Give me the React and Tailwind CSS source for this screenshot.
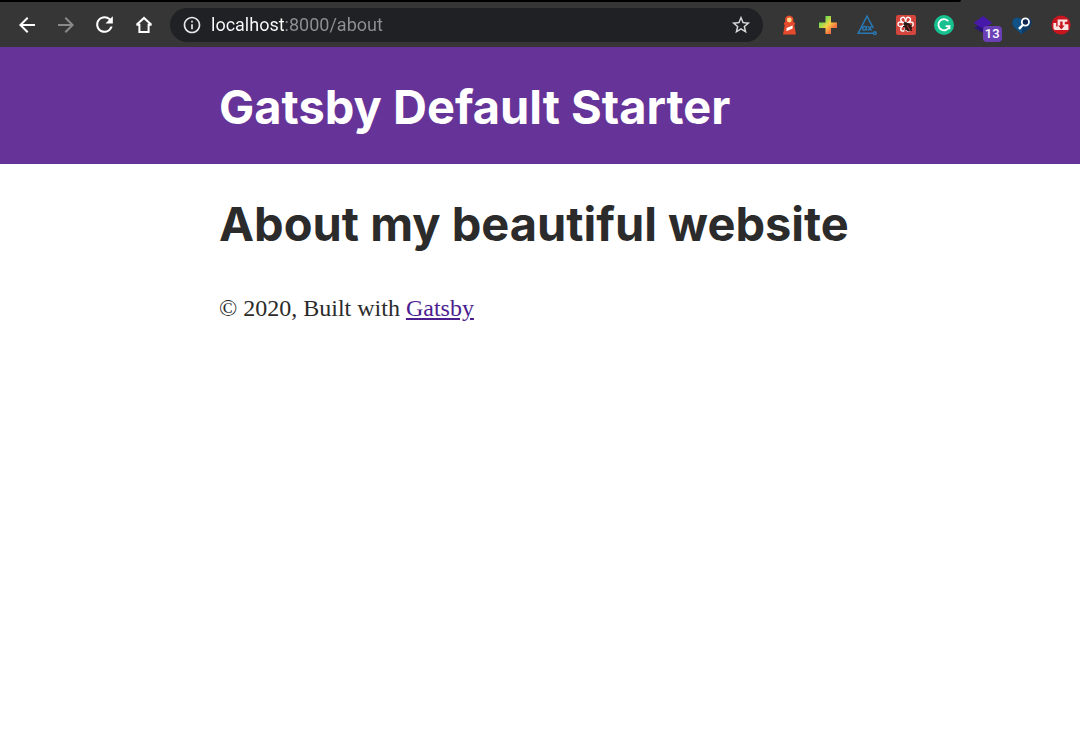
import { MdArrowBack, MdArrowForward, MdRefresh, MdInfoOutline, MdStarBorder } from 'react-icons/md'

function HomeIcon() {
  return (
    <svg width="24" height="24" viewBox="0 0 24 24" fill="none" stroke="currentColor" strokeWidth="2">
      <path d="M4.6 11.7 12 4.9l7.4 6.8M4.4 11.7h3v7.3h9.2v-7.3h3" />
    </svg>
  )
}

function LighthouseIcon() {
  return (
    <svg width="20" height="22" viewBox="0 0 20 22">
      <path d="M10 1.4c2.6.4 4.4 1.8 4.4 3.6v3.4H16v2.4h-.8L17 20.6H4l1.8-9.8H5V8.4h1.2V5C6.2 3.2 7.8 1.8 10 1.4z" fill="#e64a2c" />
      <circle cx="10.3" cy="6" r="2.4" fill="#fbd98a" />
      <path d="m7.6 14 6-2.4v3l-6.2 2.6z" fill="#fff" />
    </svg>
  )
}

function PlusIcon() {
  return (
    <svg width="20" height="20" viewBox="0 0 20 20">
      <defs>
        <linearGradient id="plus" x1="0" y1="0" x2="1" y2="1">
          <stop offset="0.25" stopColor="#7ede4e" />
          <stop offset="0.5" stopColor="#f8cf45" />
          <stop offset="0.75" stopColor="#f5713f" />
        </linearGradient>
      </defs>
      <path d="M7.5 1H13v6.5h6V13h-6v6H7.5v-6H1V7.5h6.5z" fill="url(#plus)" />
    </svg>
  )
}

function AxeIcon() {
  return (
    <svg width="22" height="22" viewBox="0 0 22 22" fill="none" stroke="#2878b4" strokeWidth="1.5">
      <path d="M17.4 19.2H2.2L11 2.2l6.3 12" />
      <circle cx="18.8" cy="19.2" r="1.4" />
      <path d="M10.4 12v4.4M10.2 14.3a1.8 1.8 0 1 0-3.6 0 1.8 1.8 0 0 0 3.6 0M12 12.2l3.6 4.2M15.6 12.2 12 16.4" />
    </svg>
  )
}

const petalAngles = [30, 90, 150, 210, 270, 330]

function ReactBugIcon() {
  return (
    <svg width="22" height="22" viewBox="0 0 22 22">
      <rect x="1" y="1" width="20" height="20" rx="2" fill="#d3453d" />
      <g fill="none" stroke="#fff" strokeWidth="1.4">
        {petalAngles.map((angle) => (
          <path
            key={angle}
            d="M10.6 10.2 8.6 6.4C8 3.6 9 2.6 10.6 2.6s2.6 1 2 3.8z"
            transform={`rotate(${angle} 10.6 10.2)`}
          />
        ))}
      </g>
      <g stroke="#2b1614" strokeWidth="1">
        <ellipse cx="13.2" cy="13.2" rx="2.8" ry="3.8" transform="rotate(-35 13.2 13.2)" fill="#2b1614" />
        <circle cx="10.4" cy="9.8" r="1.5" fill="#2b1614" />
        <path d="m8 12.6 3-.6M9.4 16.2l2.2-1.6M13.4 9l-.8 2.2M17 11l-2.4 1M17 17l-2-1.6" />
      </g>
      <path d="m12 11 3 5.4" stroke="#d3453d" strokeWidth="0.8" />
    </svg>
  )
}

function GrammarlyIcon() {
  return (
    <svg width="22" height="22" viewBox="0 0 22 22" fill="none">
      <circle cx="11" cy="11" r="10" fill="#16c08f" />
      <path d="M15.4 7.2a5.6 5.6 0 1 0 1 5h-3.8M16.5 11.4v3.8" stroke="#fff" strokeWidth="1.8" />
    </svg>
  )
}

function LayersIcon() {
  return (
    <svg width="22" height="22" viewBox="0 0 22 22">
      <path d="M2 13.6 11 9l9 4.6-9 5.4z" fill="#2b1478" />
      <path d="M1.6 9 11 2l9.4 7-9.4 5.6z" fill="#4619ab" />
    </svg>
  )
}

function HeartSearchIcon() {
  return (
    <svg width="22" height="22" viewBox="0 0 22 22" fill="none">
      <path d="M11 20C5 15.6 1.4 12.4 1.4 8.4c0-5 6.6-6.4 9.6-2.4 3-4 9.6-2.6 9.6 2.4 0 4-3.6 7.2-9.6 11.6z" fill="#0e3a68" />
      <path d="M11 6v14C5 15.6 1.4 12.4 1.4 8.4 1.4 3.6 8 2 11 6z" fill="#105285" />
      <circle cx="14.4" cy="8" r="3.6" fill="#0b2550" stroke="#fff" strokeWidth="1.8" />
      <path d="M11.8 11 8 14.8" stroke="#fff" strokeWidth="2.4" />
    </svg>
  )
}

function DownloadIcon() {
  return (
    <svg width="22" height="22" viewBox="0 0 22 22">
      <circle cx="11" cy="11" r="9.6" fill="#c9151e" />
      <path d="M3.4 9h2.8v3.4h1.4V5.4h9.8v2.4h-2.6v2.4h3.6V16H6C4.400 16 3.400 15 3.400 13.400z" fill="#fbe4e4" />
      <path d="M10.2 7.4h2.4v4.200h2L11.4 15.400 8.200 11.600h2z" fill="#c9151e" />
    </svg>
  )
}

const navButtons = [
  { label: 'Back', icon: <MdArrowBack size={24} /> },
  { label: 'Forward', icon: <MdArrowForward size={24} />, disabled: true },
  { label: 'Reload', icon: <MdRefresh size={25} /> },
  { label: 'Home', icon: <HomeIcon /> },
]

const extensions = [
  { label: 'Lighthouse', icon: <LighthouseIcon /> },
  { label: 'Add', icon: <PlusIcon /> },
  { label: 'Axe', icon: <AxeIcon /> },
  { label: 'React', icon: <ReactBugIcon /> },
  { label: 'Grammarly', icon: <GrammarlyIcon /> },
  { label: 'Layers', icon: <LayersIcon />, badge: '13' },
  { label: 'Site search', icon: <HeartSearchIcon /> },
  { label: 'Downloader', icon: <DownloadIcon /> },
]

function Toolbar() {
  return (
    <div className="bg-[#363636]">
      <div className="h-0.5 w-[89%] bg-black rounded-br-sm" />
      <div className="flex items-center h-[45px] pl-[7px]">
        <div className="flex shrink-0">
          {navButtons.map(({ label, icon, disabled }) => (
            <button
              key={label}
              aria-label={label}
              disabled={disabled}
              className="flex items-center justify-center w-[39px] h-8 text-white disabled:text-[#8a8a8a]"
            >
              {icon}
            </button>
          ))}
        </div>
        <div className="flex flex-1 min-w-0 items-center h-[34px] mx-[7px] pl-3 pr-[11px] rounded-full bg-[#202124]">
          <MdInfoOutline size={20} className="shrink-0 text-[#e8e8e8]" />
          {/* host is bright, the rest of the url is dimmed */}
          <input
            type="text"
            aria-label="Address"
            defaultValue="localhost:8000/about"
            className="flex-1 min-w-0 ml-[9px] h-7 outline-none font-['Roboto',sans-serif] text-lg text-transparent bg-clip-text bg-[linear-gradient(90deg,#ffffff_74px,#8e9094_74px)]"
          />
          <button aria-label="Bookmark this page" className="shrink-0 text-[#d8d8d8]">
            <MdStarBorder size={22} />
          </button>
        </div>
        <div className="grid grid-cols-8 w-[310px] shrink-0">
          {extensions.map(({ label, icon, badge }) => (
            <button key={label} aria-label={label} className="relative flex items-center justify-center h-8">
              {icon}
              {badge && (
                <span className="absolute left-[19px] top-[17px] px-0.5 h-4 rounded-sm bg-[#6b3fb5] font-['Roboto',sans-serif] text-[13px] leading-4 font-medium text-white">
                  {badge}
                </span>
              )}
            </button>
          ))}
        </div>
      </div>
    </div>
  )
}

export default function App() {
  return (
    <div className="min-h-screen bg-white">
      <Toolbar />
      <header className="bg-[#663399]">
        <div className="max-w-[642px] mx-auto pt-8 pb-[30px]">
          <h1 className="font-['Inter',sans-serif] text-[47px] leading-[55px] font-bold whitespace-nowrap">
            <a href="/" className="text-white no-underline">Gatsby Default Starter</a>
          </h1>
        </div>
      </header>
      <div className="max-w-[642px] mx-auto">
        <main className="pt-8">
          <h1 className="font-['Inter',sans-serif] text-[47px] leading-[55px] font-bold whitespace-nowrap text-[#2b2b2b]">
            About my beautiful website
          </h1>
        </main>
        <footer className="pt-[39px] font-['Liberation_Serif',serif] text-2xl leading-9 text-[#2b2b2b]">
          © 2020, Built with{' '}
          <a href="https://www.gatsbyjs.com" className="text-[#4b1d8f] underline">Gatsby</a>
        </footer>
      </div>
    </div>
  )
}
